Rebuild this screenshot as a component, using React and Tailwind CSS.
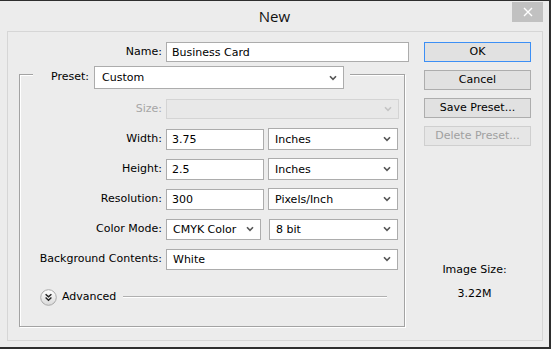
import React from "react";

const font = { fontFamily: '"DejaVu Sans", Verdana, sans-serif' };

function Chevron({ disabled }) {
  return (
    <svg width="8" height="6" viewBox="0 0 8 6" className="shrink-0">
      <path d="M1 1.2 L4 4.4 L7 1.2" fill="none" stroke={disabled ? "#c4c4c4" : "#555"} strokeWidth="1.6" />
    </svg>
  );
}

function Select({ w, h = "h-[22px]", value, disabled, pl = "pl-[6px]" }) {
  return (
    <div
      className={`${w} ${h} ${pl} pr-[6px] flex items-center justify-between border ${
        disabled ? "border-[#d4d4d4] bg-[#e8e8e8]" : "border-[#acacac] bg-white"
      }`}
    >
      <span className="text-[11px] text-black leading-none">{value}</span>
      <Chevron disabled={disabled} />
    </div>
  );
}

function Input({ w, h = "h-[21px]", value }) {
  return (
    <div className={`${w} ${h} pl-[5px] flex items-center border border-[#acacac] bg-white`}>
      <span className="text-[11px] text-black leading-none">{value}</span>
    </div>
  );
}

function Row({ label, disabled, children }) {
  return (
    <div className="h-[30px] flex items-center">
      <div className={`w-[146px] pr-[4px] text-right text-[11px] ${disabled ? "text-[#a6a6a6]" : "text-black"}`}>
        {label}
      </div>
      {children}
    </div>
  );
}

function Button({ children, primary, disabled }) {
  return (
    <div
      className={`h-[20px] w-[107px] flex items-center justify-center text-[11px] border ${
        primary
          ? "border-[#3c8ff5] bg-[#e1e1e1] text-black"
          : disabled
          ? "border-[#cfcfcf] bg-[#e6e6e6] text-[#a0a0a0]"
          : "border-[#adadad] bg-[#e1e1e1] text-black"
      }`}
    >
      {children}
    </div>
  );
}

export default function App() {
  return (
    <div
      style={font}
      className="w-[551px] h-[349px] bg-[#ececec] border-t border-r-2 border-b-2 border-[#2e2e2e] flex flex-col"
    >
      {/* Title bar */}
      <div className="h-[30px] flex items-start">
        <div className="flex-1" />
        <div className="pt-[4px] text-[15px] text-[#111]" style={{ fontFamily: '"Open Sans", "Noto Sans", sans-serif' }}>
          New
        </div>
        <div className="flex-1 flex justify-end">
          <div className="mt-[1px] mr-[6px] w-[31px] h-[20px] bg-[#c1c1c1] flex items-center justify-center">
            <svg width="10" height="10" viewBox="0 0 10 10">
              <path d="M1 1 L9 9 M9 1 L1 9" stroke="#fff" strokeWidth="1.4" />
            </svg>
          </div>
        </div>
      </div>

      {/* Panel */}
      <div className="ml-[7px] w-[536px] h-[310px] border border-[#d6d6d6] flex">
        {/* Left column */}
        <div className="w-[402px] flex flex-col">
          <div className="mt-[10px] h-[20px] flex items-center">
            <div className="w-[158px] pr-[4px] text-right text-[11px] text-black">Name:</div>
            <Input w="w-[243px]" h="h-[20px]" value="Business Card" />
          </div>

          {/* Group box */}
          <div className="mt-[12px] ml-[11px] w-[386px] h-[253px] border border-[#a3a3a3] shadow-[1px_1px_0_#fff,inset_1px_1px_0_#fff] flex flex-col">
            <div className="-mt-[9px] ml-[13px] w-fit h-[23px] pr-[6px] bg-[#ececec] flex items-center">
              <div className="w-[56px] text-right text-[11px] text-black">Preset:</div>
              <div className="ml-[5px]">
                <Select w="w-[250px]" h="h-[23px]" pl="pl-[7px]" value="Custom" />
              </div>
            </div>

            <div className="mt-[5px] flex flex-col">
              <Row label="Size:" disabled>
                <Select w="w-[233px]" h="h-[20px]" value="" disabled />
              </Row>
              <Row label="Width:">
                <Input w="w-[98px]" value="3.75" />
                <div className="ml-[4px]">
                  <Select w="w-[130px]" value="Inches" />
                </div>
              </Row>
              <Row label="Height:">
                <Input w="w-[98px]" value="2.5" />
                <div className="ml-[4px]">
                  <Select w="w-[130px]" value="Inches" />
                </div>
              </Row>
              <Row label="Resolution:">
                <Input w="w-[98px]" value="300" />
                <div className="ml-[4px]">
                  <Select w="w-[130px]" value="Pixels/Inch" />
                </div>
              </Row>
              <Row label="Color Mode:">
                <Select w="w-[95px]" h="h-[21px]" value="CMYK Color" />
                <div className="ml-[8px]">
                  <Select w="w-[129px]" h="h-[21px]" value="8 bit" />
                </div>
              </Row>
              <Row label="Background Contents:">
                <Select w="w-[232px]" h="h-[21px]" value="White" />
              </Row>
            </div>

            <div className="mt-[8px] h-[30px] pl-[20px] pr-[17px] flex items-center">
              <svg width="17" height="17" viewBox="0 0 17 17" className="shrink-0">
                <defs>
                  <linearGradient id="adv" x1="0" y1="0" x2="0" y2="1">
                    <stop offset="0" stopColor="#ffffff" />
                    <stop offset="1" stopColor="#d9d9d9" />
                  </linearGradient>
                </defs>
                <circle cx="8.5" cy="8.5" r="7.8" fill="url(#adv)" stroke="#a8a8a8" strokeWidth="1" />
                <path d="M5.6 5.2 L8.5 7.8 L11.4 5.2 M5.6 8.6 L8.5 11.2 L11.4 8.6" fill="none" stroke="#222" strokeWidth="1.4" />
              </svg>
              <span className="ml-[5px] text-[11px] text-black">Advanced</span>
              <div className="ml-[7px] flex-1 h-[2px] border-t border-[#b0b0b0] border-b border-b-white" />
            </div>
          </div>
        </div>

        {/* Right column */}
        <div className="ml-[14px] w-[107px] flex flex-col">
          <div className="mt-[10px] flex flex-col gap-[8px]">
            <Button primary>OK</Button>
            <Button>Cancel</Button>
            <Button>Save Preset...</Button>
            <Button disabled>Delete Preset...</Button>
          </div>
          <div className="mt-[116px] h-[16px] pr-[6px] text-center text-[11px] text-black leading-[16px]">Image Size:</div>
          <div className="mt-[8px] h-[16px] pr-[6px] text-center text-[11px] text-black leading-[16px]">3.22M</div>
        </div>
      </div>
    </div>
  );
}
